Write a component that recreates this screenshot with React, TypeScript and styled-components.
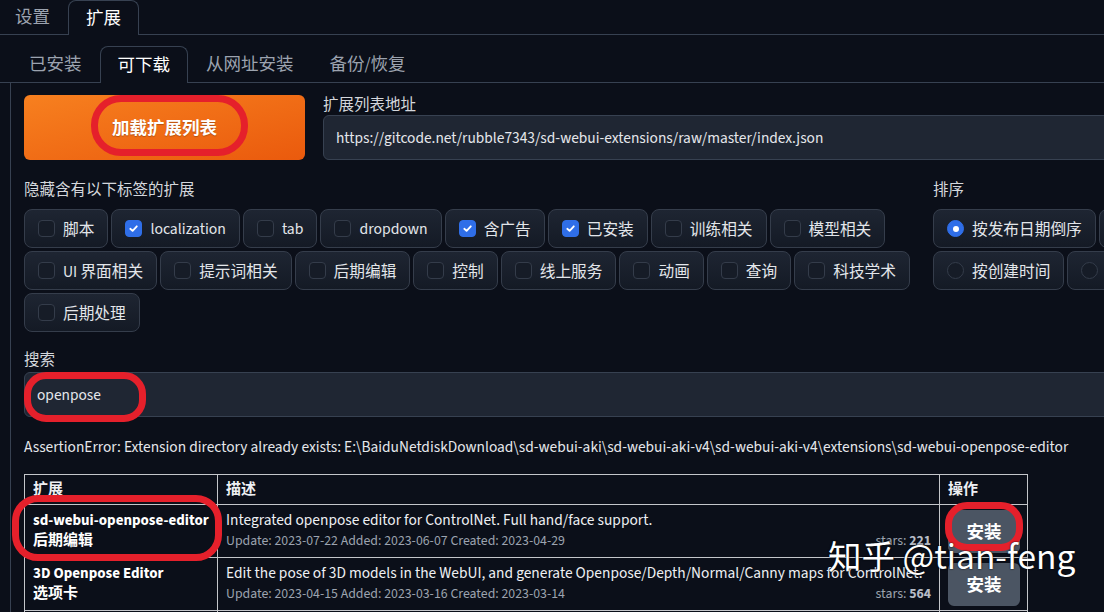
import React from "react";
import styled, { createGlobalStyle, css } from "styled-components";

const FONT = `"Source Sans 3", "Noto Sans CJK SC", "Liberation Sans", sans-serif`;
const MARK_FONT = `"Noto Sans CJK SC", "Noto Sans", sans-serif`;

const GlobalStyle = createGlobalStyle`
  * { box-sizing: border-box; }
  html, body { margin: 0; padding: 0; background: #0b0f19; overflow: hidden; }
  body { font-family: ${FONT}; color: #e5e7eb; }
`;

const Page = styled.div`
  position: relative;
  width: 1900px;
  height: 612px;
  overflow: hidden;
  background: #0b0f19;
`;

const TabNav = styled.div<{ $height: number; $pad?: number; $shift?: number }>`
  display: flex;
  align-items: stretch;
  height: ${(p) => p.$height + 1}px;
  border-bottom: 1px solid #374151;
  padding-left: ${(p) => p.$pad ?? 0}px;
  margin-left: ${(p) => p.$shift ?? 0}px;
`;

const Tab = styled.div<{ $active?: boolean }>`
  display: flex;
  align-items: center;
  padding: 1px 17px 0;
  font-size: 17.5px;
  line-height: 1;
  white-space: nowrap;
  color: #9ca3af;
  border: 1px solid transparent;
  border-bottom: none;
  border-radius: 8px 8px 0 0;
  ${(p) =>
    p.$active &&
    css`
      color: #ffffff;
      border-color: #374151;
      background: #0b0f19;
      margin-bottom: -1px;
    `}
`;

const InnerTabs = styled.div`
  padding-top: 11px;
`;

const Panel = styled.div`
  margin-left: 10px;
  border-left: 1px solid #374151;
  padding: 12px 0 0 13px;
  height: 560px;
  display: flex;
  flex-direction: column;
`;

const TopRow = styled.div`
  display: flex;
  gap: 18px;
  height: 65px;
`;

const LoadButton = styled.button`
  width: 281px;
  height: 65px;
  flex: none;
  border: none;
  border-radius: 6px;
  background: linear-gradient(to bottom right, #f7801f, #ea5a0d);
  color: #ffffff;
  font-family: ${FONT};
  font-size: 17.5px;
  font-weight: 700;
  text-shadow: 0 1px 1px rgba(0, 0, 0, 0.25);
`;

const Field = styled.div`
  display: flex;
  flex-direction: column;
  flex: 1;
`;

const FieldLabel = styled.div<{ $mb?: number }>`
  font-size: 15.5px;
  line-height: 20px;
  color: #d4d7dc;
  margin-bottom: ${(p) => p.$mb ?? 0}px;
  white-space: nowrap;
`;

const TextBox = styled.input`
  height: 45px;
  width: 100%;
  background: #1f2633;
  border: 1px solid #374151;
  border-radius: 6px;
  padding: 0 12px;
  font-family: ${FONT};
  font-size: 15.4px;
  color: #e5e7eb;
  outline: none;
`;

const FilterRow = styled.div`
  display: flex;
  gap: 4px;
  align-items: flex-start;
  margin-top: 20px;
`;

const TagColumn = styled.div`
  width: 905px;
  flex: none;
`;

const SortColumn = styled.div`
  width: 905px;
  flex: none;
`;

const ChipWrap = styled.div`
  display: flex;
  flex-wrap: wrap;
  gap: 3px;
`;

const Chip = styled.label`
  height: 39px;
  display: inline-flex;
  align-items: center;
  gap: 8px;
  padding: 0 13px;
  border: 1px solid #353d4b;
  border-radius: 8px;
  background: linear-gradient(to bottom, #1e2532, #141a25);
  font-size: 15.7px;
  color: #e3e6ea;
  white-space: nowrap;
`;

const Box = styled.span<{ $checked?: boolean }>`
  width: 17px;
  height: 17px;
  flex: none;
  border-radius: 4px;
  display: flex;
  align-items: center;
  justify-content: center;
  border: 1px solid ${(p) => (p.$checked ? "#2f6ee8" : "#343c4a")};
  background: ${(p) => (p.$checked ? "#2f6ee8" : "#161c27")};
`;

const Dot = styled.span<{ $checked?: boolean }>`
  width: 17px;
  height: 17px;
  flex: none;
  border-radius: 50%;
  display: flex;
  align-items: center;
  justify-content: center;
  border: 1px solid ${(p) => (p.$checked ? "#2f6ee8" : "#343c4a")};
  background: ${(p) => (p.$checked ? "#2f6ee8" : "#161c27")};
  &::after {
    content: "";
    width: 6px;
    height: 6px;
    border-radius: 50%;
    background: ${(p) => (p.$checked ? "#ffffff" : "transparent")};
  }
`;

const SearchBlock = styled.div`
  margin-top: 18px;
`;

const ErrorLine = styled.div`
  margin-top: 20px;
  font-size: 15.4px;
  line-height: 20px;
  color: #e5e7eb;
  white-space: nowrap;
`;

const ExtTable = styled.table`
  margin-top: 17px;
  border-collapse: collapse;
  table-layout: fixed;
  width: 1004px;
  font-size: 15.4px;
  color: #eef0f3;
`;

const HeadCell = styled.th<{ $w: number }>`
  width: ${(p) => p.$w}px;
  height: 30px;
  padding: 0 8px;
  text-align: left;
  font-size: 15px;
  font-weight: 700;
  line-height: 20px;
  border: 1px solid #c4c6ca;
`;

const Cell = styled.td`
  border: 1px solid #c4c6ca;
  padding: 0 8px;
  height: 53px;
  vertical-align: middle;
`;

const NameLine = styled.div`
  font-weight: 700;
  font-size: 15px;
  line-height: 20px;
  white-space: nowrap;
  color: #ffffff;
`;

const DescLine = styled.div`
  line-height: 20px;
  white-space: nowrap;
`;

const MetaLine = styled.div`
  display: flex;
  justify-content: space-between;
  font-size: 13.8px;
  line-height: 22px;
  color: #9ca3af;
  white-space: nowrap;
`;

const Stars = styled.span`
  b {
    font-weight: 700;
    color: #b6bcc6;
  }
`;

const InstallButton = styled.button`
  width: 72px;
  height: 43px;
  border: none;
  border-radius: 6px;
  background: #4b5563;
  color: #ffffff;
  font-family: ${FONT};
  font-size: 17.5px;
  font-weight: 700;
`;

const Ring = styled.div<{ $x: number; $y: number; $w: number; $h: number; $r: number }>`
  position: absolute;
  left: ${(p) => p.$x}px;
  top: ${(p) => p.$y}px;
  width: ${(p) => p.$w}px;
  height: ${(p) => p.$h}px;
  border: 7px solid #e5202b;
  border-radius: ${(p) => p.$r}px;
  pointer-events: none;
`;

const Watermark = styled.div`
  position: absolute;
  left: 828px;
  top: 538px;
  font-family: ${MARK_FONT};
  font-size: 33.5px;
  line-height: 1;
  color: #ffffff;
  white-space: pre;
  text-shadow: 0 0 2px rgba(0, 0, 0, 0.7), 0 0 1px rgba(0, 0, 0, 0.8);
  pointer-events: none;
`;

const Check = () => (
  <svg width="11" height="11" viewBox="0 0 12 12" fill="none">
    <path d="M2.5 6.3 L5 8.6 L9.6 3.6" stroke="#ffffff" strokeWidth="2" strokeLinecap="round" strokeLinejoin="round" />
  </svg>
);

const TAGS: [string, boolean][] = [
  ["脚本", false],
  ["localization", true],
  ["tab", false],
  ["dropdown", false],
  ["含广告", true],
  ["已安装", true],
  ["训练相关", false],
  ["模型相关", false],
  ["UI 界面相关", false],
  ["提示词相关", false],
  ["后期编辑", false],
  ["控制", false],
  ["线上服务", false],
  ["动画", false],
  ["查询", false],
  ["科技学术", false],
  ["后期处理", false],
];

const SORTS = [
  "按发布日期倒序",
  "按发布日期正序",
  "按首字母正序",
  "按首字母倒序",
  "按内部顺序",
  "按更新时间",
  "按创建时间",
  "按 Star 数量",
];

const ROWS = [
  {
    name: "sd-webui-openpose-editor",
    tag: "后期编辑",
    desc: "Integrated openpose editor for ControlNet. Full hand/face support.",
    meta: "Update: 2023-07-22 Added: 2023-06-07 Created: 2023-04-29",
    stars: "221",
  },
  {
    name: "3D Openpose Editor",
    tag: "选项卡",
    desc: "Edit the pose of 3D models in the WebUI, and generate Openpose/Depth/Normal/Canny maps for ControlNet.",
    meta: "Update: 2023-04-15 Added: 2023-03-16 Created: 2023-03-14",
    stars: "564",
  },
  {
    name: "Openpose Editor",
    tag: "选项卡",
    desc: "Openpose Editor for AUTOMATIC1111's stable-diffusion-webui",
    meta: "Update: 2023-05-02 Added: 2023-02-19 Created: 2023-02-18",
    stars: "1412",
  },
];

export default function App() {
  return (
    <Page>
      <GlobalStyle />
      <TabNav $height={34} $shift={-3}>
        <Tab>设置</Tab>
        <Tab $active>扩展</Tab>
      </TabNav>
      <InnerTabs>
        <TabNav $height={36} $pad={11}>
          <Tab>已安装</Tab>
          <Tab $active>可下载</Tab>
          <Tab>从网址安装</Tab>
          <Tab>备份/恢复</Tab>
        </TabNav>
        <Panel>
          <TopRow>
            <LoadButton>加载扩展列表</LoadButton>
            <Field>
              <FieldLabel>扩展列表地址</FieldLabel>
              <TextBox readOnly value="https://gitcode.net/rubble7343/sd-webui-extensions/raw/master/index.json" />
            </Field>
          </TopRow>

          <FilterRow>
            <TagColumn>
              <FieldLabel $mb={9}>隐藏含有以下标签的扩展</FieldLabel>
              <ChipWrap>
                {TAGS.map(([label, checked]) => (
                  <Chip key={label}>
                    <Box $checked={checked}>{checked && <Check />}</Box>
                    {label}
                  </Chip>
                ))}
              </ChipWrap>
            </TagColumn>
            <SortColumn>
              <FieldLabel $mb={9}>排序</FieldLabel>
              <ChipWrap>
                {SORTS.map((label, i) => (
                  <Chip key={label}>
                    <Dot $checked={i === 0} />
                    {label}
                  </Chip>
                ))}
              </ChipWrap>
            </SortColumn>
          </FilterRow>

          <SearchBlock>
            <FieldLabel $mb={2}>搜索</FieldLabel>
            <TextBox readOnly value="openpose" />
          </SearchBlock>

          <ErrorLine>
            AssertionError: Extension directory already exists: E:\BaiduNetdiskDownload\sd-webui-aki\sd-webui-aki-v4\sd-webui-aki-v4\extensions\sd-webui-openpose-editor
          </ErrorLine>

          <ExtTable>
            <thead>
              <tr>
                <HeadCell $w={193}>扩展</HeadCell>
                <HeadCell $w={722}>描述</HeadCell>
                <HeadCell $w={88}>操作</HeadCell>
              </tr>
            </thead>
            <tbody>
              {ROWS.map((r) => (
                <tr key={r.name}>
                  <Cell>
                    <NameLine>{r.name}</NameLine>
                    <NameLine>{r.tag}</NameLine>
                  </Cell>
                  <Cell>
                    <DescLine>{r.desc}</DescLine>
                    <MetaLine>
                      <span>{r.meta}</span>
                      <Stars>
                        stars: <b>{r.stars}</b>
                      </Stars>
                    </MetaLine>
                  </Cell>
                  <Cell>
                    <InstallButton>安装</InstallButton>
                  </Cell>
                </tr>
              ))}
            </tbody>
          </ExtTable>
        </Panel>
      </InnerTabs>

      <Ring $x={91} $y={95} $w={157} $h={61} $r={30} />
      <Ring $x={24} $y={372} $w={122} $h={50} $r={22} />
      <Ring $x={12} $y={495} $w={210} $h={66} $r={26} />
      <Ring $x={945} $y={502} $w={78} $h={49} $r={22} />
      <Watermark>知乎 @tian-feng</Watermark>
    </Page>
  );
}
